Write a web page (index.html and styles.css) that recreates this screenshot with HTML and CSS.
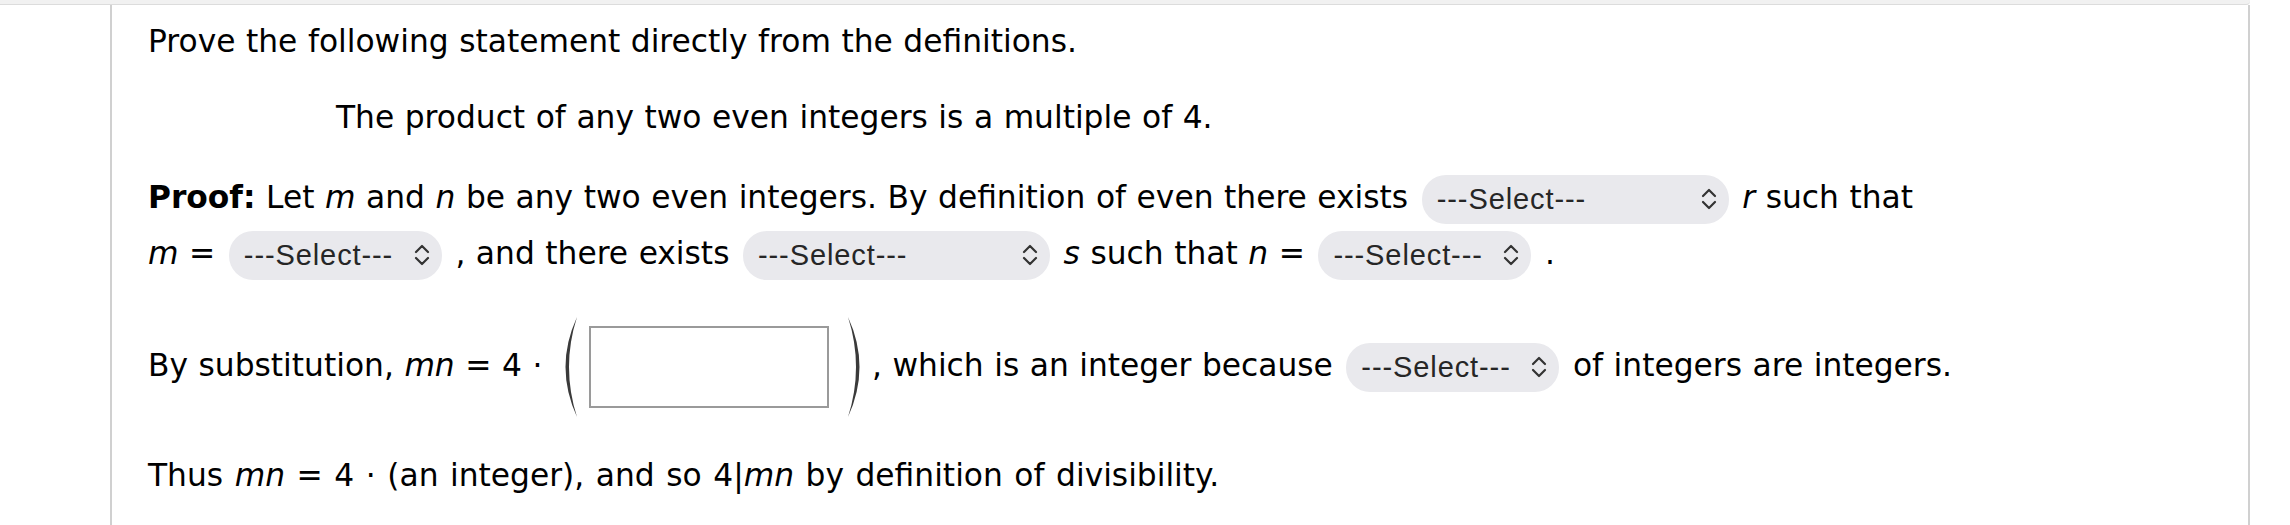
FILE: index.html
```html
<!DOCTYPE html>
<html>
<head>
<meta charset="utf-8">
<link rel="stylesheet" href="styles.css">
</head>
<body>
<div class="strip"></div>
<div class="card">
  <p class="p1">Prove the following statement directly from the definitions.</p>
  <p class="p2">The product of any two even integers is a multiple of 4.</p>
  <p class="p3"><b>Proof:</b> Let <i>m</i> and <i>n</i> be any two even integers. By definition of even there exists <span class="sel wide"><span class="lbl">---Select---</span><svg class="chev" viewBox="0 0 16 26" width="16" height="26"><path d="M2 10 L8 4 L14 10 M2 16 L8 22 L14 16"/></svg></span> <i>r</i> such that<br><i>m</i> = <span class="sel"><span class="lbl">---Select---</span><svg class="chev" viewBox="0 0 16 26" width="16" height="26"><path d="M2 10 L8 4 L14 10 M2 16 L8 22 L14 16"/></svg></span> , and there exists <span class="sel wide"><span class="lbl">---Select---</span><svg class="chev" viewBox="0 0 16 26" width="16" height="26"><path d="M2 10 L8 4 L14 10 M2 16 L8 22 L14 16"/></svg></span> <i>s</i> such that <i>n</i> = <span class="sel"><span class="lbl">---Select---</span><svg class="chev" viewBox="0 0 16 26" width="16" height="26"><path d="M2 10 L8 4 L14 10 M2 16 L8 22 L14 16"/></svg></span> .</p>
  <p class="p5">By substitution, <i>mn</i> = 4 · <svg class="paren lp" viewBox="0 0 22 102" width="22" height="102"><path d="M20 1 Q-3 51 20 101 Q4 51 20 1 Z"/></svg><span class="box"></span><svg class="paren rp" viewBox="0 0 22 102" width="22" height="102"><path d="M2 1 Q25 51 2 101 Q18 51 2 1 Z"/></svg>, which is an integer because <span class="sel"><span class="lbl">---Select---</span><svg class="chev" viewBox="0 0 16 26" width="16" height="26"><path d="M2 10 L8 4 L14 10 M2 16 L8 22 L14 16"/></svg></span> of integers are integers.</p>
  <p class="p6">Thus <i>mn</i> = 4 · (an integer), and so 4|<i>mn</i> by definition of divisibility.</p>
</div>
</body>
</html>
```
FILE: styles.css
```css
html, body {
  margin: 0;
  padding: 0;
  background: #fff;
}
body {
  font-family: "DejaVu Sans", Verdana, sans-serif;
  font-size: 31.3px;
  word-spacing: 0.6px;
  color: #000;
  width: 2290px;
  height: 525px;
  overflow: hidden;
}
.strip {
  width: 2250px;
  height: 4px;
  background: #f1f1f1;
  border-bottom: 1px solid #dcdcdc;
  border-bottom-right-radius: 4px;
}
.card {
  margin-left: 110px;
  width: 2100px;
  height: 600px;
  border-left: 2px solid #d0d0d0;
  border-right: 2px solid #d0d0d0;
  padding: 16px 0 0 36px;
}
p {
  margin: 0;
  line-height: 40px;
  white-space: nowrap;
}
.p2 {
  margin-top: 36px;
  padding-left: 188px;
}
.p3 {
  margin-top: 32px;
  line-height: 56px;
}
.p5 {
  margin-top: 33px;
  line-height: 102px;
}
.p6 {
  margin-top: 37px;
  word-spacing: 1.6px;
}
i {
  font-style: italic;
}
.sel {
  display: inline-flex;
  align-items: center;
  justify-content: space-between;
  box-sizing: border-box;
  width: 213px;
  height: 49px;
  padding: 0 12px 0 15px;
  margin: 0 3px;
  border-radius: 24px;
  background: #e9e9ed;
  vertical-align: middle;
  line-height: 49px;
  word-spacing: 0;
}
.sel.wide {
  width: 307px;
}
.lbl {
  font-family: "Liberation Sans", Arial, sans-serif;
  font-size: 29px;
  letter-spacing: 0.9px;
  color: #262626;
}
.chev {
  fill: none;
  stroke: #333;
  stroke-width: 2.2;
  stroke-linecap: round;
  stroke-linejoin: round;
}
.paren {
  vertical-align: middle;
  fill: #3a3a3a;
}
.lp {
  margin-left: 4px;
}
.rp {
  margin-right: 4px;
}
.box {
  display: inline-block;
  box-sizing: border-box;
  width: 240px;
  height: 82px;
  border: 2px solid #9a9a9a;
  background: #fff;
  vertical-align: middle;
  margin: 0 17px 0 10px;
}
```
